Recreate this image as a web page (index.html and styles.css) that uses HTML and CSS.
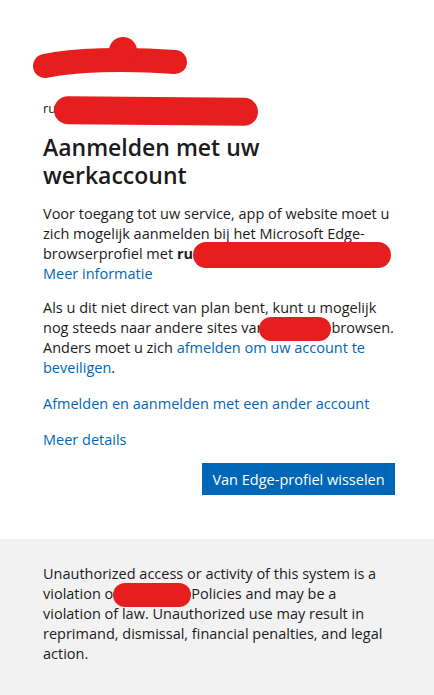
FILE: index.html
```html
<!DOCTYPE html>
<html lang="nl">
<head>
<meta charset="utf-8">
<link rel="stylesheet" href="styles.css">
</head>
<body>
<main class="card">
  <div class="logo">
    <svg class="scribble" width="160" height="50" viewBox="0 0 160 50">
      <path d="M12 30 C40 24, 90 22, 142 26" stroke="#e61e1e" stroke-width="24" stroke-linecap="round" fill="none"/>
      <circle cx="90" cy="15" r="14" fill="#e61e1e"/>
    </svg>
  </div>
  <div class="identity"><span>ru</span><span class="redact r-id"></span></div>
  <h1 class="title">Aanmelden met uw werkaccount</h1>
  <p class="text">Voor toegang tot uw service, app of website moet u zich mogelijk aanmelden bij het Microsoft Edge-browserprofiel met <b>ru</b><span class="redact r-mail"></span><br><a class="link" href="#">Meer informatie</a></p>
  <p class="text">Als u dit niet direct van plan bent, kunt u mogelijk nog steeds naar andere sites van<span class="redact r-org"></span>browsen. Anders moet u zich <a class="link" href="#">afmelden om uw account te beveiligen</a>.</p>
  <p class="linkline"><a class="link" href="#">Afmelden en aanmelden met een ander account</a></p>
  <p class="linkline"><a class="link" href="#">Meer details</a></p>
  <div class="actions"><button class="btn">Van Edge-profiel wisselen</button></div>
</main>
<footer class="footer">
  <p class="notice">Unauthorized access or activity of this system is a violation o<span class="redact r-foot"></span>Policies and may be a violation of law. Unauthorized use may result in reprimand, dismissal, financial penalties, and legal action.</p>
</footer>
</body>
</html>
```
FILE: styles.css
```css
* { box-sizing: border-box; }
html, body { margin: 0; padding: 0; background: #fff; }
body {
  font-family: "Open Sans", "Noto Sans", sans-serif;
  color: #1b1b1b;
  width: 434px;
  height: 695px;
  display: flex;
  flex-direction: column;
}
.card {
  padding: 36px 39px 0 43px;
  height: 539px;
}
.logo { height: 50px; margin-left: -10px; }
.scribble { display: block; }
.identity {
  margin-top: 5px;
  font-size: 13px;
  line-height: 24px;
  display: flex;
  align-items: center;
  color: #1b1b1b;
}
.redact {
  display: inline-block;
  background: #e61e1e;
  border-radius: 14px;
  vertical-align: middle;
}
.r-id { width: 204px; height: 28px; margin-left: -2px; margin-top: 6px; transform: rotate(0.5deg); }
.title {
  font-size: 23px;
  font-weight: 600;
  line-height: 28px;
  margin: 8px 0 0;
  width: 240px;
}
.text {
  font-size: 14.5px;
  line-height: 20px;
  margin: 14px 0 0;
  color: #1b1b1b;
}
.title + .text { margin-top: 15px; }
.text b { font-weight: 700; }
.r-mail { width: 198px; height: 26px; margin: -6px 0; }
.r-org { width: 72px; height: 24px; margin: -6px 0 -6px -6px; }
.link { color: #0067b8; text-decoration: none; }
.linkline { font-size: 14.5px; line-height: 20px; margin: 16px 0 0; }
.actions { display: flex; justify-content: flex-end; margin-top: 13px; }
.btn {
  background: #0067b8;
  color: #fff;
  border: none;
  font-family: inherit;
  font-size: 14.5px;
  height: 32px;
  width: 193px;
  padding: 0;
}
.footer {
  background: #f2f2f2;
  flex: 1;
  padding: 25px 39px 0 43px;
}
.notice {
  margin: 0;
  font-size: 14.5px;
  line-height: 20px;
  color: #1b1b1b;
}
.r-foot { width: 78px; height: 24px; margin: -6px 0; }
```
